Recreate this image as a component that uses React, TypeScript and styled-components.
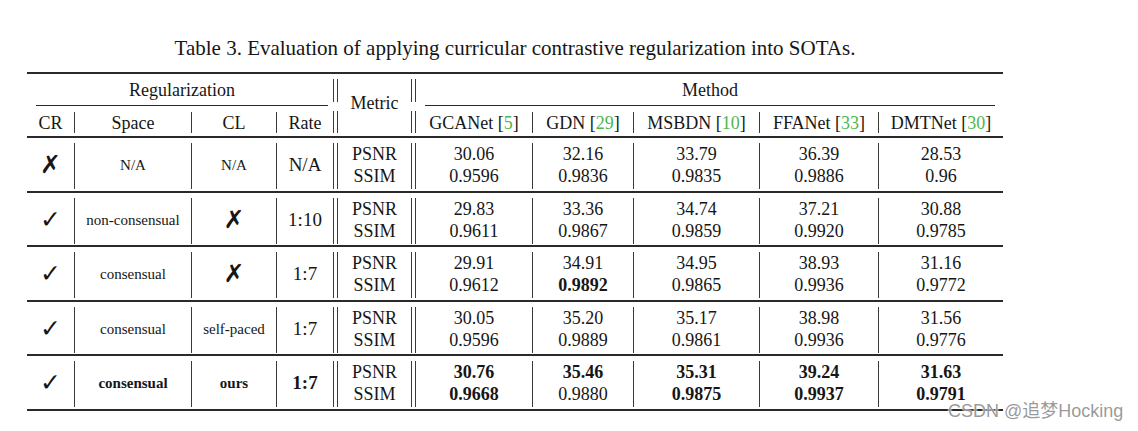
import React from 'react';
import styled, { createGlobalStyle } from 'styled-components';

const Global = createGlobalStyle`
  html, body { margin: 0; padding: 0; background: #ffffff; }
  body { font-family: "Liberation Serif", "Times New Roman", serif; color: #161616; }
`;

const COLS = '47px 117px 85px 57px 5px 73px 5px 116px 101px 126px 119px 125px';
const GREEN = '#4cb84c';
const RULE = '#2a2a2a';
const BAR = '#3a3a3a';

const Page = styled.div`
  position: relative;
  width: 1138px;
  height: 431px;
  padding: 36px 0 0 27px;
  box-sizing: border-box;
`;

const Caption = styled.div`
  width: 976px;
  text-align: center;
  font-size: 21px;
  line-height: 24px;
  margin-bottom: 12px;
`;

const Table = styled.div`
  width: 976px;
  border-top: 2px solid ${RULE};
  border-bottom: 2px solid ${RULE};
`;

const Header = styled.div`
  display: grid;
  grid-template-columns: ${COLS};
  grid-template-rows: 32px 30px;
  font-size: 18px;
`;

const SpanTitle = styled.div<{ $from: number; $to: number; $ml: number; $mr: number }>`
  grid-row: 1;
  grid-column: ${(p) => p.$from} / ${(p) => p.$to};
  margin: 0 ${(p) => p.$mr}px 0 ${(p) => p.$ml}px;
  border-bottom: 1px solid ${RULE};
  display: flex;
  align-items: center;
  justify-content: center;
  padding-top: 1px;
`;

const MetricTitle = styled.div`
  grid-row: 1 / 3;
  grid-column: 6;
  display: flex;
  align-items: center;
  justify-content: center;
  padding-bottom: 3px;
`;

const DoubleBar = styled.div<{ $col: number; $row?: number; $mt: number; $mb: number }>`
  grid-column: ${(p) => p.$col};
  ${(p) => (p.$row ? `grid-row: ${p.$row};` : '')}
  margin: ${(p) => p.$mt}px 0 ${(p) => p.$mb}px;
  border-left: 1px solid ${BAR};
  border-right: 1px solid ${BAR};
`;

const HeadCell = styled.div<{ $bar?: boolean; $col?: number }>`
  grid-row: 2;
  ${(p) => (p.$col ? `grid-column: ${p.$col};` : '')}
  display: flex;
  align-items: center;
  justify-content: center;
  white-space: nowrap;
  border-left: ${(p) => (p.$bar ? `1px solid ${BAR}` : 'none')};
  margin: 6px 0 3px;
  line-height: 20px;
`;

const Cite = styled.span`
  color: ${GREEN};
`;

const Row = styled.div`
  display: grid;
  grid-template-columns: ${COLS};
  height: 54.5px;
  box-sizing: border-box;
  border-top: 2px solid ${RULE};
  padding: 5px 0 3px;
`;

const Cell = styled.div<{ $bar?: boolean; $size?: number; $bold?: boolean }>`
  display: flex;
  flex-direction: column;
  align-items: center;
  justify-content: center;
  white-space: nowrap;
  border-left: ${(p) => (p.$bar ? `1px solid ${BAR}` : 'none')};
  font-size: ${(p) => p.$size ?? 18}px;
  font-weight: ${(p) => (p.$bold ? 700 : 400)};
  line-height: 22px;
  padding-bottom: 2px;
`;

const Mark = styled.span`
  font-family: "DejaVu Sans", sans-serif;
  font-weight: 400;
  font-size: 25px;
  line-height: 24px;
`;

const Num = styled.span<{ $bold?: boolean }>`
  font-weight: ${(p) => (p.$bold ? 700 : 400)};
`;

const Watermark = styled.div`
  position: absolute;
  left: 948px;
  top: 400px;
  font-family: "Liberation Sans", "Noto Sans CJK SC", sans-serif;
  font-size: 18px;
  line-height: 22px;
  color: rgba(120, 120, 120, 0.75);
  text-shadow: 0 0 2px #ffffff, 0 0 2px #ffffff;
  white-space: nowrap;
`;

type V = [string, boolean];
type RowData = {
  cr: 'x' | 'v';
  space: string;
  cl: string;
  rate: string;
  bold?: boolean;
  vals: [V, V][];
};

const n = (s: string, b = false): V => [s, b];

const rows: RowData[] = [
  {
    cr: 'x', space: 'N/A', cl: 'N/A', rate: 'N/A',
    vals: [
      [n('30.06'), n('0.9596')], [n('32.16'), n('0.9836')], [n('33.79'), n('0.9835')],
      [n('36.39'), n('0.9886')], [n('28.53'), n('0.96')],
    ],
  },
  {
    cr: 'v', space: 'non-consensual', cl: 'x', rate: '1:10',
    vals: [
      [n('29.83'), n('0.9611')], [n('33.36'), n('0.9867')], [n('34.74'), n('0.9859')],
      [n('37.21'), n('0.9920')], [n('30.88'), n('0.9785')],
    ],
  },
  {
    cr: 'v', space: 'consensual', cl: 'x', rate: '1:7',
    vals: [
      [n('29.91'), n('0.9612')], [n('34.91'), n('0.9892', true)], [n('34.95'), n('0.9865')],
      [n('38.93'), n('0.9936')], [n('31.16'), n('0.9772')],
    ],
  },
  {
    cr: 'v', space: 'consensual', cl: 'self-paced', rate: '1:7',
    vals: [
      [n('30.05'), n('0.9596')], [n('35.20'), n('0.9889')], [n('35.17'), n('0.9861')],
      [n('38.98'), n('0.9936')], [n('31.56'), n('0.9776')],
    ],
  },
  {
    cr: 'v', space: 'consensual', cl: 'ours', rate: '1:7', bold: true,
    vals: [
      [n('30.76', true), n('0.9668', true)], [n('35.46', true), n('0.9880')],
      [n('35.31', true), n('0.9875', true)], [n('39.24', true), n('0.9937', true)],
      [n('31.63', true), n('0.9791', true)],
    ],
  },
];

const methods: [string, string][] = [
  ['GCANet', '5'], ['GDN', '29'], ['MSBDN', '10'], ['FFANet', '33'], ['DMTNet', '30'],
];

const markOf = (m: 'x' | 'v') => <Mark>{m === 'x' ? '✗' : '✓'}</Mark>;

export default function App() {
  return (
    <Page>
      <Global />
      <Caption>Table 3. Evaluation of applying curricular contrastive regularization into SOTAs.</Caption>
      <Table>
        <Header>
          <SpanTitle $from={1} $to={5} $ml={9} $mr={5}>Regularization</SpanTitle>
          <DoubleBar $col={5} $row={1} $mt={5} $mb={4} />
          <MetricTitle>Metric</MetricTitle>
          <DoubleBar $col={7} $row={1} $mt={5} $mb={4} />
          <SpanTitle $from={8} $to={13} $ml={9} $mr={8}>Method</SpanTitle>
          <HeadCell>CR</HeadCell>
          <HeadCell $bar>Space</HeadCell>
          <HeadCell $bar>CL</HeadCell>
          <HeadCell $bar>Rate</HeadCell>
          <DoubleBar $col={5} $row={2} $mt={5} $mb={3} />
          <DoubleBar $col={7} $row={2} $mt={5} $mb={3} />
          {methods.map(([name, ref], i) => (
            <HeadCell key={name} $bar={i > 0} $col={8 + i}>
              <span>
                {name} [<Cite>{ref}</Cite>]
              </span>
            </HeadCell>
          ))}
        </Header>
        {rows.map((r, ri) => (
          <Row key={ri}>
            <Cell>{markOf(r.cr)}</Cell>
            <Cell $bar $size={15} $bold={r.bold}>{r.space}</Cell>
            <Cell $bar $size={15} $bold={r.bold}>
              {r.cl === 'x' ? markOf('x') : r.cl}
            </Cell>
            <Cell $bar $size={19} $bold={r.bold}>{r.rate}</Cell>
            <DoubleBar $col={5} $mt={0} $mb={0} />
            <Cell>
              <span>PSNR</span>
              <span>SSIM</span>
            </Cell>
            <DoubleBar $col={7} $mt={0} $mb={0} />
            {r.vals.map(([a, b], i) => (
              <Cell key={i} $bar={i > 0}>
                <Num $bold={a[1]}>{a[0]}</Num>
                <Num $bold={b[1]}>{b[0]}</Num>
              </Cell>
            ))}
          </Row>
        ))}
      </Table>
      <Watermark>CSDN @追梦Hocking</Watermark>
    </Page>
  );
}
